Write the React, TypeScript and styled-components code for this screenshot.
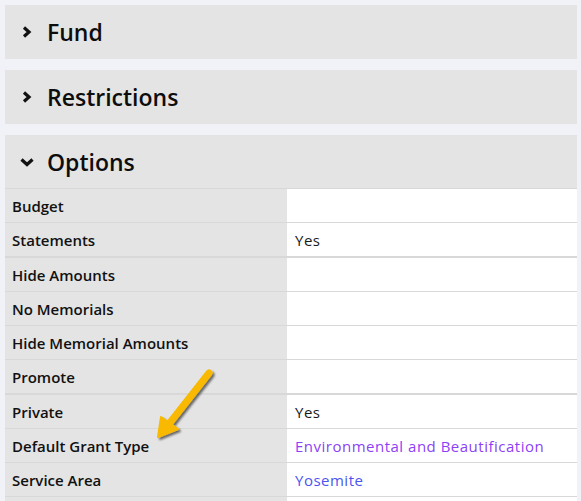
import styled, { createGlobalStyle } from "styled-components";

const GlobalStyle = createGlobalStyle`
  html, body {
    margin: 0;
    padding: 0;
    background: #f0f2f8;
    font-family: "Open Sans", "Liberation Sans", sans-serif;
    color: #111;
  }
`;

const Page = styled.div`
  position: relative;
  display: flex;
  flex-direction: column;
  gap: 11px;
  padding: 5px 4px 0 5px;
  height: 501px;
  overflow: hidden;
  box-sizing: border-box;
`;

const Panel = styled.section`
  background: #e4e4e4;
`;

const PanelHeader = styled.div<{ $open?: boolean }>`
  display: flex;
  align-items: center;
  gap: 11px;
  height: ${(p) => (p.$open ? "53px" : "54px")};
  padding-left: 13px;
  font-size: 23px;
  font-weight: 600;
  color: #0d0d0d;
`;

const Chevron = styled.svg`
  width: 18px;
  height: 18px;
  flex: none;
`;

const Table = styled.table`
  width: 100%;
  border-collapse: collapse;
  table-layout: fixed;
  font-size: 15px;
`;

const Row = styled.tr<{ $thick?: boolean }>`
  border-top: 1px solid #d8d8d8;
  border-bottom: ${(p) => (p.$thick ? "2px" : "1px")} solid #d8d8d8;
`;

const Label = styled.td`
  width: 268px;
  height: 33px;
  padding: 0 7px;
  background: #e4e4e4;
  font-weight: 600;
  color: #111;
`;

const Value = styled.td<{ $color?: string }>`
  padding: 0 8px;
  background: #fff;
  letter-spacing: 0.5px;
  color: ${(p) => p.$color ?? "#1a1a1a"};
`;

const Arrow = styled.svg`
  position: absolute;
  left: 150px;
  top: 362px;
  width: 70px;
  height: 85px;
  pointer-events: none;
`;

type Item = { label: string; value?: string; color?: string; thick?: boolean };

const rows: Item[] = [
  { label: "Budget" },
  { label: "Statements", value: "Yes", thick: true },
  { label: "Hide Amounts" },
  { label: "No Memorials" },
  { label: "Hide Memorial Amounts" },
  { label: "Promote", thick: true },
  { label: "Private", value: "Yes" },
  { label: "Default Grant Type", value: "Environmental and Beautification", color: "#8c3ff6" },
  { label: "Service Area", value: "Yosemite", color: "#4a55f2" },
  { label: "" },
];

function ChevronRight() {
  return (
    <Chevron viewBox="0 0 18 18">
      <path d="M6 4.5 L11 9 L6 13.5" fill="none" stroke="#111" strokeWidth="3.2" strokeLinejoin="miter" />
    </Chevron>
  );
}

function ChevronDown() {
  return (
    <Chevron viewBox="0 0 18 18">
      <path d="M3.5 6.5 L9 11.5 L14.5 6.5" fill="none" stroke="#111" strokeWidth="3.2" strokeLinejoin="miter" />
    </Chevron>
  );
}

export default function App() {
  return (
    <>
      <GlobalStyle />
      <Page>
        <Panel>
          <PanelHeader>
            <ChevronRight />
            Fund
          </PanelHeader>
        </Panel>
        <Panel>
          <PanelHeader>
            <ChevronRight />
            Restrictions
          </PanelHeader>
        </Panel>
        <Panel>
          <PanelHeader $open>
            <ChevronDown />
            Options
          </PanelHeader>
          <Table>
            <tbody>
              {rows.map((r, i) => (
                <Row key={i} $thick={r.thick}>
                  <Label>{r.label}</Label>
                  <Value $color={r.color}>{r.value ?? ""}</Value>
                </Row>
              ))}
            </tbody>
          </Table>
        </Panel>
        {/* annotation arrow */}
        <Arrow viewBox="0 0 70 85">
          <defs>
            <filter id="sh" x="-30%" y="-30%" width="160%" height="160%">
              <feDropShadow dx="2" dy="2" stdDeviation="1.2" floodColor="#000" floodOpacity="0.55" />
            </filter>
          </defs>
          <g filter="url(#sh)">
            <path d="M59 11 L15 67" stroke="#f8b900" strokeWidth="7" strokeLinecap="round" />
            <path d="M8 75 L11 55 L28 67 Z" fill="#f8b900" stroke="#f8b900" strokeWidth="2" strokeLinejoin="round" />
          </g>
        </Arrow>
      </Page>
    </>
  );
}
